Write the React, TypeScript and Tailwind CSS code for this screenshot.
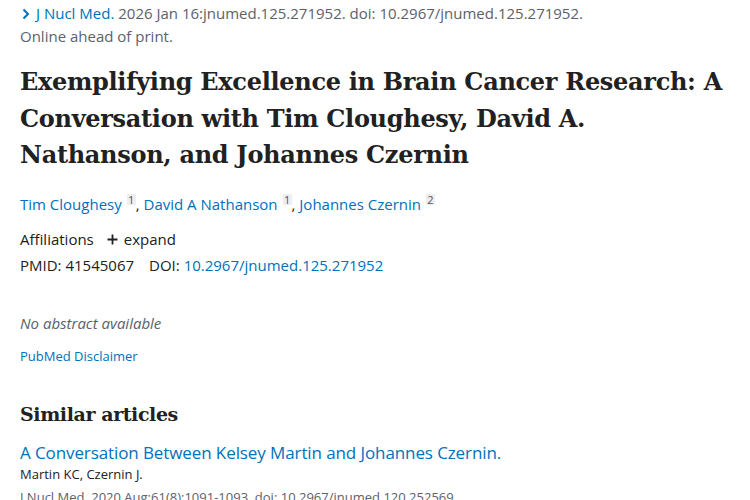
import React from "react";

const sans = "font-['Open_Sans','Noto_Sans',sans-serif]";
const serif = "font-['DejaVu_Serif','Liberation_Serif',serif]";

const Sup = ({ n }: { n: string }) => (
  <span className="ml-[5px] inline-block h-[11px] w-[9px] bg-[#eeeeee] text-center align-[6px] text-[11px] leading-[11px] text-[#555]">
    {n}
  </span>
);

export default function App() {
  return (
    <div className={`${sans} bg-white w-[750px] h-[500px] overflow-hidden pl-[20px] pt-[2px] text-[#212121]`}>
      {/* Citation */}
      <div className="text-[15px] leading-[23px] text-[#5b616b]">
        <div className="flex items-center">
          <svg width="12" height="12" viewBox="0 0 12 12" className="mr-[4px] text-[#0071bc]">
            <path d="M3.5 1.5 L8 6 L3.5 10.5" fill="none" stroke="currentColor" strokeWidth="2" />
          </svg>
          <span className="text-[#0071bc]">J Nucl Med.</span>
          <span>&nbsp;2026 Jan 16:jnumed.125.271952. doi: 10.2967/jnumed.125.271952.</span>
        </div>
        <div>Online ahead of print.</div>
      </div>

      {/* Title */}
      <h1 className={`${serif} mt-[16px] w-[712px] text-[24px] leading-[36.5px] font-bold tracking-[-0.3px] text-[#212121]`}>
        Exemplifying Excellence in Brain Cancer Research: A Conversation with Tim Cloughesy, David A. Nathanson, and Johannes Czernin
      </h1>

      {/* Authors */}
      <div className="mt-[20px] text-[15px] leading-[20px] text-[#0071bc]">
        <span>Tim Cloughesy</span>
        <Sup n="1" />
        <span className="text-[#212121]">, </span>
        <span>David A Nathanson</span>
        <Sup n="1" />
        <span className="text-[#212121]">, </span>
        <span>Johannes Czernin</span>
        <Sup n="2" />
      </div>

      {/* Affiliations / ids */}
      <div className="mt-[12px] text-[15px] leading-[26px]">
        <div className="flex items-center">
          <span>Affiliations</span>
          <svg width="11" height="11" viewBox="0 0 11 11" className="ml-[13px] mr-[6px] mt-[1px] text-[#212121]">
            <path d="M5.5 0.5 V10.5 M0.5 5.5 H10.5" fill="none" stroke="currentColor" strokeWidth="1.8" />
          </svg>
          <span>expand</span>
        </div>
        <div className="flex gap-[15px]">
          <span>PMID: 41545067</span>
          <span>
            DOI: <span className="text-[#0071bc]">10.2967/jnumed.125.271952</span>
          </span>
        </div>
      </div>

      {/* Abstract */}
      <div className="mt-[35px] text-[15px] italic text-[#5b616b] leading-[20px]">No abstract available</div>
      <div className="mt-[14px] text-[13px] text-[#0071bc] leading-[18px]">PubMed Disclaimer</div>

      {/* Similar articles */}
      <h2 className={`${serif} mt-[35px] text-[19px] leading-[28px] font-bold tracking-[-0.4px] text-[#212121]`}>
        Similar articles
      </h2>
      <div className="mt-[14px] text-[17px] leading-[22px] tracking-[-0.1px] text-[#0071bc]">
        A Conversation Between Kelsey Martin and Johannes Czernin.
      </div>
      <div className="mt-[1px] text-[13px] leading-[18px] text-[#212121]">Martin KC, Czernin J.</div>
      <div className="mt-[5px] text-[13px] leading-[18px] text-[#5b616b]">
        J Nucl Med. 2020 Aug;61(8):1091-1093. doi: 10.2967/jnumed.120.252569.
      </div>
    </div>
  );
}
